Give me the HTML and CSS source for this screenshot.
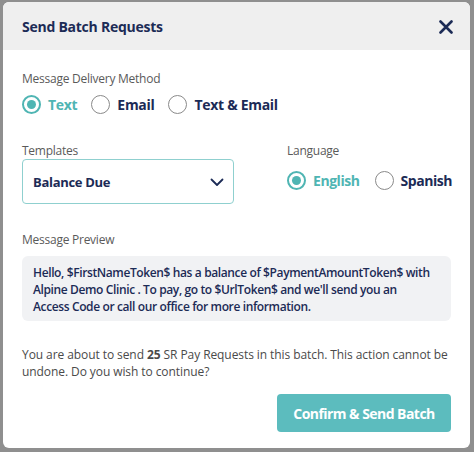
FILE: index.html
```html
<!DOCTYPE html>
<html>
<head>
<meta charset="utf-8">
<link rel="stylesheet" href="styles.css">
</head>
<body>
<div class="modal">
  <div class="modal-header">
    <h1 class="title">Send Batch Requests</h1>
    <svg class="close" width="14" height="14" viewBox="0 0 14 14"><path d="M1.5 1.5 L12.5 12.5 M12.5 1.5 L1.5 12.5" stroke="#1c2b56" stroke-width="2.6" stroke-linecap="round"/></svg>
  </div>
  <div class="modal-body">
    <div class="field">
      <div class="label">Message Delivery Method</div>
      <div class="radios">
        <label class="radio checked"><span class="dot"></span>Text</label>
        <label class="radio"><span class="dot"></span>Email</label>
        <label class="radio"><span class="dot"></span>Text &amp; Email</label>
      </div>
    </div>
    <div class="row">
      <div class="field templates">
        <div class="label">Templates</div>
        <div class="select">
          <span>Balance Due</span>
          <svg width="14" height="9" viewBox="0 0 14 9"><path d="M1.5 1.5 L7 7 L12.5 1.5" fill="none" stroke="#1c2b56" stroke-width="1.8" stroke-linecap="round" stroke-linejoin="round"/></svg>
        </div>
      </div>
      <div class="field language">
        <div class="label">Language</div>
        <div class="radios lang">
          <label class="radio checked"><span class="dot"></span>English</label>
          <label class="radio"><span class="dot"></span>Spanish</label>
        </div>
      </div>
    </div>
    <div class="field preview-field">
      <div class="label">Message Preview</div>
      <div class="preview">Hello, $FirstNameToken$ has a balance of $PaymentAmountToken$ with<br>Alpine Demo Clinic . To pay, go to $UrlToken$ and we'll send you an<br>Access Code or call our office for more information.</div>
    </div>
    <p class="warning">You are about to send <b>25</b> SR Pay Requests in this batch. This action cannot be undone. Do you wish to continue?</p>
    <div class="actions">
      <button class="confirm">Confirm &amp; Send Batch</button>
    </div>
  </div>
</div>
</body>
</html>
```
FILE: styles.css
```css
* { box-sizing: border-box; }
html, body { margin: 0; padding: 0; }
body {
  width: 474px;
  height: 452px;
  background: #8f8f8f;
  font-family: "Open Sans", "Liberation Sans", sans-serif;
  padding: 2px 4px 4px 3px;
  overflow: hidden;
}
.modal {
  width: 467px;
  height: 446px;
  background: #fff;
  border-radius: 6px;
  overflow: hidden;
}
.modal-header {
  height: 48px;
  background: #efefef;
  display: flex;
  align-items: center;
  justify-content: space-between;
  padding: 0 17px 0 19px;
}
.title {
  margin: 0;
  font-size: 14px;
  letter-spacing: -0.25px;
  font-weight: 700;
  color: #1c2b56;
}
.close { margin-top: 2px; }
.modal-body {
  padding: 20px 19px 0 19px;
}
.label {
  font-size: 12px;
  letter-spacing: -0.25px;
  color: #5a5a5a;
  line-height: 17px;
}
.radios {
  display: flex;
  gap: 14px;
  margin-top: 7px;
  height: 20px;
  align-items: center;
}
.radio {
  display: flex;
  align-items: center;
  gap: 7px;
  font-size: 14px;
  letter-spacing: -0.3px;
  font-weight: 700;
  color: #1c2b56;
}
.radio .dot {
  width: 19px;
  height: 19px;
  border-radius: 50%;
  border: 1.5px solid #8a8a8a;
  display: flex;
  align-items: center;
  justify-content: center;
  flex: none;
}
.radio.checked { color: #4fb5b3; }
.radio.checked .dot { border: 2px solid #4fb5b3; }
.radio.checked .dot::after {
  content: "";
  width: 9px;
  height: 9px;
  border-radius: 50%;
  background: #4fb5b3;
}
.row {
  display: flex;
  margin-top: 28px;
}
.templates { width: 212px; flex: none; }
.language { margin-left: 53px; flex: none; }
.select {
  height: 45px;
  border: 1px solid #8fd0cf;
  border-radius: 4px;
  display: flex;
  align-items: center;
  justify-content: space-between;
  padding: 0 9px 0 10px;
  font-size: 13px;
  letter-spacing: -0.3px;
  font-weight: 700;
  color: #1c2b56;
}
.select svg { margin-top: 1px; }
.lang { margin-top: 11px; gap: 15px; }
.lang .radio { letter-spacing: -0.45px; }
.preview-field { margin-top: 27px; }
.preview {
  margin-top: 8px;
  background: #f1f2f4;
  border-radius: 6px;
  padding: 8px 11px 6px 11px;
  font-size: 12px;
  letter-spacing: -0.38px;
  font-weight: 600;
  line-height: 17px;
  color: #1c2b56;
}
.warning {
  margin: 25px 0 0 0;
  font-size: 12px;
  letter-spacing: -0.08px;
  line-height: 17px;
  color: #4a4a4a;
}
.warning b { font-weight: 700; }
.actions {
  display: flex;
  justify-content: flex-end;
  margin-top: 14px;
}
.confirm {
  width: 174px;
  height: 38px;
  border: none;
  border-radius: 4px;
  background: #5cbcbe;
  color: #fff;
  font-family: inherit;
  font-size: 14px;
  letter-spacing: -0.55px;
  font-weight: 700;
  padding: 0;
}
```
